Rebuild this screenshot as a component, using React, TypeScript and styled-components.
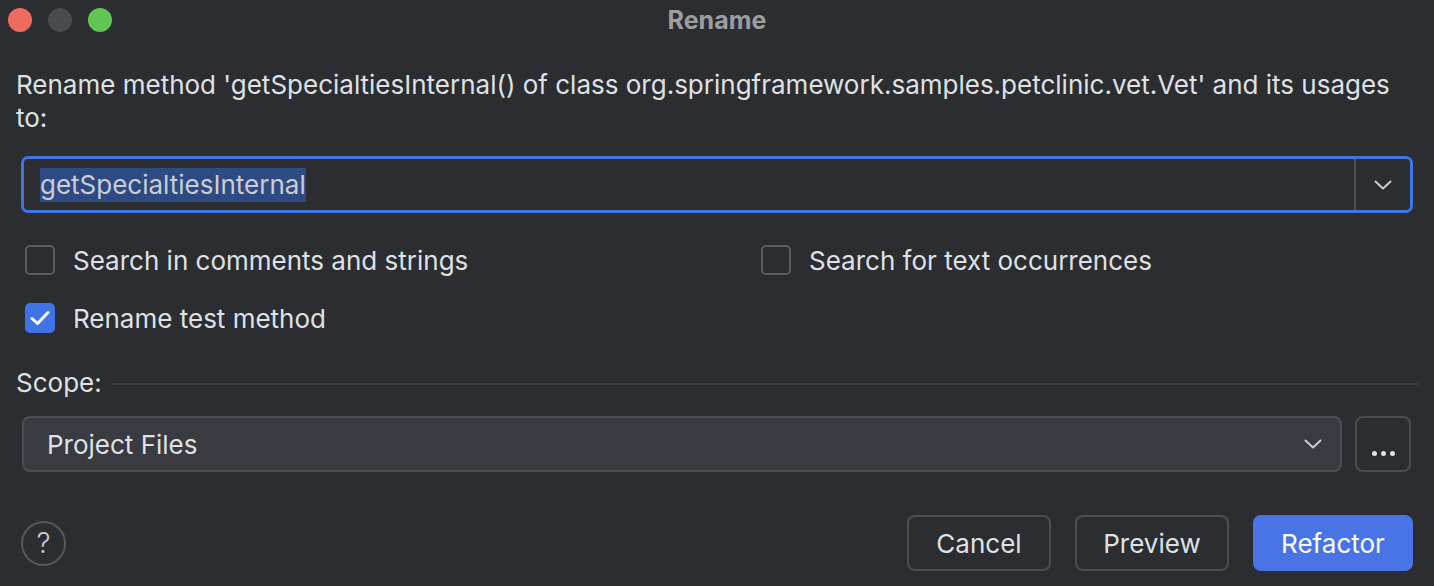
import { createGlobalStyle } from 'styled-components';
import styled from 'styled-components';

const GlobalStyle = createGlobalStyle`
  html, body {
    margin: 0;
    padding: 0;
    background: #2b2d30;
  }
  body {
    font-family: Inter, "Noto Sans", sans-serif;
    color: #dfe1e5;
  }
`;

const Dialog = styled.div`
  width: 1434px;
  height: 586px;
  background: #2b2d30;
  display: flex;
  flex-direction: column;
  box-sizing: border-box;
`;

const TitleBar = styled.div`
  height: 40px;
  display: grid;
  grid-template-columns: 1fr auto 1fr;
  align-items: center;
  padding: 0 8px;
`;

const Lights = styled.div`
  display: flex;
  gap: 16px;
`;

const Light = styled.span<{ color: string }>`
  width: 24px;
  height: 24px;
  border-radius: 50%;
  background: ${({ color }) => color};
`;

const Title = styled.div`
  font-size: 25px;
  font-weight: 700;
  color: #9b9da2;
`;

const Body = styled.div`
  display: flex;
  flex-direction: column;
  padding: 28px 21px 0 16px;
`;

const Message = styled.p`
  margin: 0;
  font-size: 26px;
  line-height: 33px;
  color: #dfe1e5;
`;

const NameField = styled.div`
  margin: 22px 0 0 5px;
  height: 57px;
  border: 3px solid #3f74e6;
  border-radius: 7px;
  display: flex;
  align-items: stretch;
  box-sizing: border-box;
`;

const NameInput = styled.div`
  flex: 1;
  display: flex;
  align-items: center;
  padding-left: 16px;
  font-size: 26px;
`;

const Selected = styled.span`
  background: #2e4a82;
  color: #c9cdd6;
  line-height: 34px;
`;

const DropButton = styled.div`
  width: 54px;
  border-left: 2px solid #4e5157;
  display: flex;
  align-items: center;
  justify-content: center;
`;

const Options = styled.div`
  display: grid;
  grid-template-columns: 736px 1fr;
  row-gap: 28px;
  margin: 32px 0 0 9px;
`;

const Option = styled.label`
  display: flex;
  align-items: center;
  gap: 18px;
  font-size: 26px;
  color: #dfe1e5;
  height: 30px;
`;

const Box = styled.span<{ checked?: boolean }>`
  width: 30px;
  height: 30px;
  box-sizing: border-box;
  border-radius: 5px;
  border: ${({ checked }) => (checked ? 'none' : '2px solid #5a5d63')};
  background: ${({ checked }) => (checked ? '#3f74e6' : 'transparent')};
  display: flex;
  align-items: center;
  justify-content: center;
`;

const ScopeHeader = styled.div`
  display: flex;
  align-items: center;
  gap: 11px;
  margin-top: 34px;
  font-size: 26px;
  color: #dfe1e5;
  margin-right: -5px;
`;

const Rule = styled.div`
  flex: 1;
  height: 2px;
  background: #3b3d42;
  margin-top: 2px;
`;

const ScopeRow = styled.div`
  display: flex;
  gap: 13px;
  margin: 18px 2px 0 6px;
`;

const Combo = styled.div`
  flex: 1;
  height: 56px;
  box-sizing: border-box;
  background: #393b40;
  border: 2px solid #4c4e54;
  border-radius: 8px;
  display: flex;
  align-items: center;
  justify-content: space-between;
  padding: 0 18px 0 23px;
  font-size: 26px;
  color: #dfe1e5;
`;

const SquareButton = styled.div`
  width: 56px;
  height: 56px;
  box-sizing: border-box;
  border: 2px solid #4c4e54;
  border-radius: 8px;
  display: flex;
  align-items: center;
  justify-content: center;
  gap: 4px;
  padding-top: 18px;
`;

const Dot = styled.span`
  width: 5px;
  height: 5px;
  border-radius: 50%;
  background: #dfe1e5;
`;

const Footer = styled.div`
  display: flex;
  align-items: center;
  justify-content: space-between;
  margin-top: auto;
  padding: 0 21px 15px 21px;
`;

const Help = styled.div`
  width: 45px;
  height: 45px;
  box-sizing: border-box;
  border-radius: 50%;
  border: 2px solid #55585e;
  display: flex;
  align-items: center;
  justify-content: center;
  font-size: 28px;
  font-weight: 300;
  color: #c9ccd1;
`;

const Buttons = styled.div`
  display: flex;
  gap: 24px;
`;

const Button = styled.button<{ primary?: boolean; w: number }>`
  width: ${({ w }) => w}px;
  height: 56px;
  box-sizing: border-box;
  border-radius: 8px;
  border: 2px solid ${({ primary }) => (primary ? '#4874e6' : '#4c4e54')};
  background: ${({ primary }) => (primary ? '#4874e6' : 'transparent')};
  color: ${({ primary }) => (primary ? '#ffffff' : '#dfe1e5')};
  font-family: Inter, "Noto Sans", sans-serif;
  font-size: 26px;
  padding: 0;
`;

function Chevron() {
  return (
    <svg width="18" height="10" viewBox="0 0 18 10" fill="none">
      <path d="M1.5 1.5 L9 8.5 L16.5 1.5" stroke="#c9ccd1" strokeWidth="2" strokeLinecap="round" strokeLinejoin="round" />
    </svg>
  );
}

function Check() {
  return (
    <svg width="20" height="16" viewBox="0 0 20 16" fill="none">
      <path d="M2 8.5 L7.5 13.5 L18 2.5" stroke="#ffffff" strokeWidth="3" strokeLinecap="round" strokeLinejoin="round" />
    </svg>
  );
}

export default function App() {
  return (
    <>
      <GlobalStyle />
      <Dialog>
        <TitleBar>
          <Lights>
            <Light color="#ed6a5e" />
            <Light color="#4a4b4f" />
            <Light color="#61c554" />
          </Lights>
          <Title>Rename</Title>
          <span />
        </TitleBar>
        <Body>
          <Message>
            Rename method 'getSpecialtiesInternal() of class org.springframework.samples.petclinic.vet.Vet' and its usages to:
          </Message>
          <NameField>
            <NameInput>
              <Selected>getSpecialtiesInternal</Selected>
            </NameInput>
            <DropButton>
              <Chevron />
            </DropButton>
          </NameField>
          <Options>
            <Option>
              <Box />
              Search in comments and strings
            </Option>
            <Option>
              <Box />
              Search for text occurrences
            </Option>
            <Option>
              <Box checked>
                <Check />
              </Box>
              Rename test method
            </Option>
          </Options>
          <ScopeHeader>
            Scope:
            <Rule />
          </ScopeHeader>
          <ScopeRow>
            <Combo>
              Project Files
              <Chevron />
            </Combo>
            <SquareButton>
              <Dot />
              <Dot />
              <Dot />
            </SquareButton>
          </ScopeRow>
        </Body>
        <Footer>
          <Help>?</Help>
          <Buttons>
            <Button w={144}>Cancel</Button>
            <Button w={154}>Preview</Button>
            <Button primary w={160}>Refactor</Button>
          </Buttons>
        </Footer>
      </Dialog>
    </>
  );
}
